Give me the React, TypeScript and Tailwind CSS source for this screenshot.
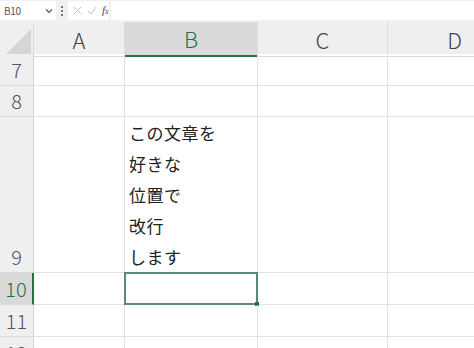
import React from "react";

const font = { fontFamily: '"Noto Sans CJK JP", "Noto Sans", sans-serif' };

const rows = [
  { n: "7", h: "h-[32px]" },
  { n: "8", h: "h-[31px]" },
  { n: "9", h: "h-[156px]", text: ["この文章を", "好きな", "位置で", "改行", "します"] },
  { n: "10", h: "h-[32px]", selected: true },
  { n: "11", h: "h-[32px]" },
  { n: "12", h: "h-[32px]" },
];

export default function App() {
  return (
    <div className="w-[474px] h-[348px] overflow-hidden bg-white text-[#333]" style={font}>
      {/* 数式バー */}
      <div className="h-[22px] bg-[#f1f1f1] flex items-start pt-[1px]">
        <div className="w-[56px] h-[19px] bg-white flex items-center justify-between pl-[4px] pr-[3px]">
          <span className="text-[10px] text-[#555] tracking-tight">B10</span>
          <svg width="8" height="6" viewBox="0 0 8 6">
            <path d="M1 1.5 L4 4.5 L7 1.5" stroke="#555" strokeWidth="1.2" fill="none" />
          </svg>
        </div>
        <div className="w-[12px] h-[19px] flex flex-col items-center justify-center gap-[2px]">
          <span className="w-[2px] h-[2px] bg-[#777]" />
          <span className="w-[2px] h-[2px] bg-[#777]" />
          <span className="w-[2px] h-[2px] bg-[#777]" />
        </div>
        <div className="w-[41px] h-[19px] bg-white flex items-center gap-[5px] pl-[5px]">
          <svg width="9" height="9" viewBox="0 0 9 9">
            <path d="M1 1 L8 8 M8 1 L1 8" stroke="#c4c4c4" strokeWidth="1" />
          </svg>
          <svg width="10" height="9" viewBox="0 0 10 9">
            <path d="M1 5 L4 8 L9 1" stroke="#c4c4c4" strokeWidth="1" fill="none" />
          </svg>
          <span className="text-[11px] italic text-[#444] leading-none" style={{ fontFamily: '"Liberation Serif", serif' }}>
            f<span className="text-[8px]">x</span>
          </span>
        </div>
        <div className="ml-[2px] flex-1 h-[19px] bg-white" />
      </div>

      {/* 列見出し */}
      <div className="grid grid-cols-[34px_91px_133px_130px_1fr] h-[32px] bg-[#efefef] text-[22px] text-[#444] font-light">
        <div className="border-r border-b border-[#dcdcdc] flex items-end justify-end p-[2px]">
          <svg width="25" height="25" viewBox="0 0 25 25">
            <path d="M25 0 L25 25 L0 25 Z" fill="#d5d5d5" />
          </svg>
        </div>
        <div className="border-r border-b border-[#dcdcdc] flex items-center justify-center">A</div>
        <div className="bg-[#dadada] border-r border-[#dcdcdc] border-b-2 border-b-[#217346] text-[#217346] flex items-center justify-center">
          B
        </div>
        <div className="border-r border-b border-[#dcdcdc] flex items-center justify-center">C</div>
        <div className="border-b border-[#dcdcdc] flex items-center justify-end pr-[12px]">D</div>
      </div>

      {/* 行 */}
      {rows.map((r) => (
        <div key={r.n} className={`grid grid-cols-[34px_91px_133px_130px_1fr] ${r.h}`}>
          <div
            className={`border-b border-[#dcdcdc] flex items-end justify-center pb-[5px] text-[20px] font-light leading-none ${
              r.selected
                ? "bg-[#d9d9d9] text-[#217346] border-r-2 border-r-[#217346]"
                : "bg-[#efefef] text-[#555] border-r border-r-[#d4d4d4]"
            }`}
          >
            {r.n}
          </div>
          <div className="border-r border-b border-[#e2e2e2]" />
          <div className="relative border-r border-b border-[#e2e2e2] pl-[4px] text-[17px] tracking-[0.5px] text-[#222] leading-[31px]">
            {r.text?.map((t) => (
              <div key={t}>{t}</div>
            ))}
            {r.selected && (
              <div className="absolute -left-px -top-px right-[-1px] bottom-[-1px] border-2 border-[#5a8a75]">
                <span className="absolute -right-[3px] -bottom-[3px] w-[4px] h-[4px] bg-[#217346]" />
              </div>
            )}
          </div>
          <div className="border-r border-b border-[#e2e2e2]" />
          <div className="border-b border-[#e2e2e2]" />
        </div>
      ))}
    </div>
  );
}
